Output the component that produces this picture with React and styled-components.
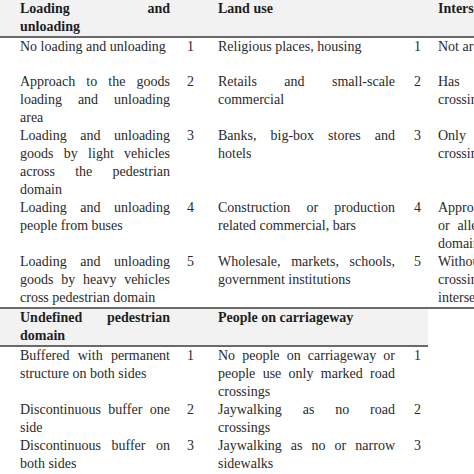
import React from "react";
import styled, { createGlobalStyle } from "styled-components";

const GlobalStyle = createGlobalStyle`
  html, body {
    margin: 0;
    padding: 0;
    background: #ffffff;
    overflow: hidden;
  }
  body {
    width: 474px;
    height: 474px;
    font-family: "Liberation Serif", "Times New Roman", serif;
  }
`;

const topRows = [
  {
    load: "No loading and unloading",
    land: "Religious places, housing",
    inter: "Not around intersections",
    lines: 2,
  },
  {
    load: "Approach to the goods loading and unloading area",
    land: "Retails and small-scale commercial",
    inter: "Has marked pedestrian crossings",
  },
  {
    load: "Loading and unloading goods by light vehicles across the pedestrian domain",
    land: "Banks, big-box stores and hotels",
    inter: "Only unmarked pedestrian crossings",
  },
  {
    load: "Loading and unloading people from buses",
    land: "Construction or production related commercial, bars",
    inter: "Approaching intersections or alleys across pedestrian domain",
  },
  {
    load: "Loading and unloading goods by heavy vehicles cross pedestrian domain",
    land: "Wholesale, markets, schools, government institutions",
    inter: "Without marked pedestrian crossings near the intersections",
  },
];

const bottomRows = [
  {
    domain: "Buffered with permanent structure on both sides",
    people: "No people on carriageway or people use only marked road crossings",
  },
  {
    domain: "Discontinuous buffer one side",
    people: "Jaywalking as no road crossings",
  },
  {
    domain: "Discontinuous buffer on both sides",
    people: "Jaywalking as no or narrow sidewalks",
  },
];

export default function App() {
  return (
    <>
      <GlobalStyle />
      <Table>
        <colgroup>
          <col style={{ width: 180 }} />
          <col style={{ width: 28 }} />
          <col style={{ width: 197 }} />
          <col style={{ width: 23 }} />
          <col style={{ width: 180 }} />
        </colgroup>
        <thead>
          <tr>
            <HeadCell $first>
              <JustLine>Loading and</JustLine>
              unloading
            </HeadCell>
            <HeadCell />
            <HeadCell>Land use</HeadCell>
            <HeadCell />
            <HeadCell>Intersection</HeadCell>
          </tr>
        </thead>
        <tbody>
          {topRows.map((r, i) => {
            const last = i === topRows.length - 1;
            return (
              <BodyRow key={i} $lines={r.lines || 1}>
                <TextCell $first $last={last}>
                  {r.load}
                </TextCell>
                <NumCell $last={last}>{i + 1}</NumCell>
                <TextCell $last={last}>{r.land}</TextCell>
                <NumCell $narrow $last={last}>
                  {i + 1}
                </NumCell>
                <TextCell $last={last}>{r.inter}</TextCell>
              </BodyRow>
            );
          })}
          <tr>
            <HeadCell $first>
              <JustLine>Undefined pedestrian</JustLine>
              domain
            </HeadCell>
            <HeadCell />
            <HeadCell>People on carriageway</HeadCell>
            <HeadCell />
            <EmptyCell />
          </tr>
          {bottomRows.map((r, i) => (
            <BodyRow key={"b" + i} $lines={1}>
              <TextCell $first>{r.domain}</TextCell>
              <NumCell>{i + 1}</NumCell>
              <TextCell>{r.people}</TextCell>
              <NumCell $narrow>{i + 1}</NumCell>
              <EmptyCell />
            </BodyRow>
          ))}
        </tbody>
      </Table>
    </>
  );
}

const Table = styled.table`
  border-collapse: collapse;
  table-layout: fixed;
  width: 608px;
  margin-top: 0;
  font-size: 14px;
  line-height: 18px;
  color: #2a2a2a;
`;

const BodyRow = styled.tr`
  height: ${(p) => p.$lines * 18}px;
`;

const HeadCell = styled.th`
  background-color: #f2f2f2;
  border-bottom: 2px solid #6a6a6a;
  padding: ${(p) => (p.$first ? "0 10px 0 20px" : "0 10px")};
  text-align: left;
  vertical-align: top;
  font-weight: bold;
  color: #1e1e1e;
  height: 36px;
`;

const JustLine = styled.span`
  display: block;
  text-align: justify;
  text-align-last: justify;
`;

const TextCell = styled.td`
  padding: ${(p) => (p.$first ? "0 10px 0 20px" : "0 10px")};
  text-align: justify;
  vertical-align: top;
  border-bottom: ${(p) => (p.$last ? "2px solid #6a6a6a" : "none")};
`;

const NumCell = styled.td`
  padding: 0 0 0 ${(p) => (p.$narrow ? "9px" : "7px")};
  vertical-align: top;
  text-align: left;
  border-bottom: ${(p) => (p.$last ? "2px solid #6a6a6a" : "none")};
`;

const EmptyCell = styled.td`
  background: #ffffff;
  padding: 0;
`;
